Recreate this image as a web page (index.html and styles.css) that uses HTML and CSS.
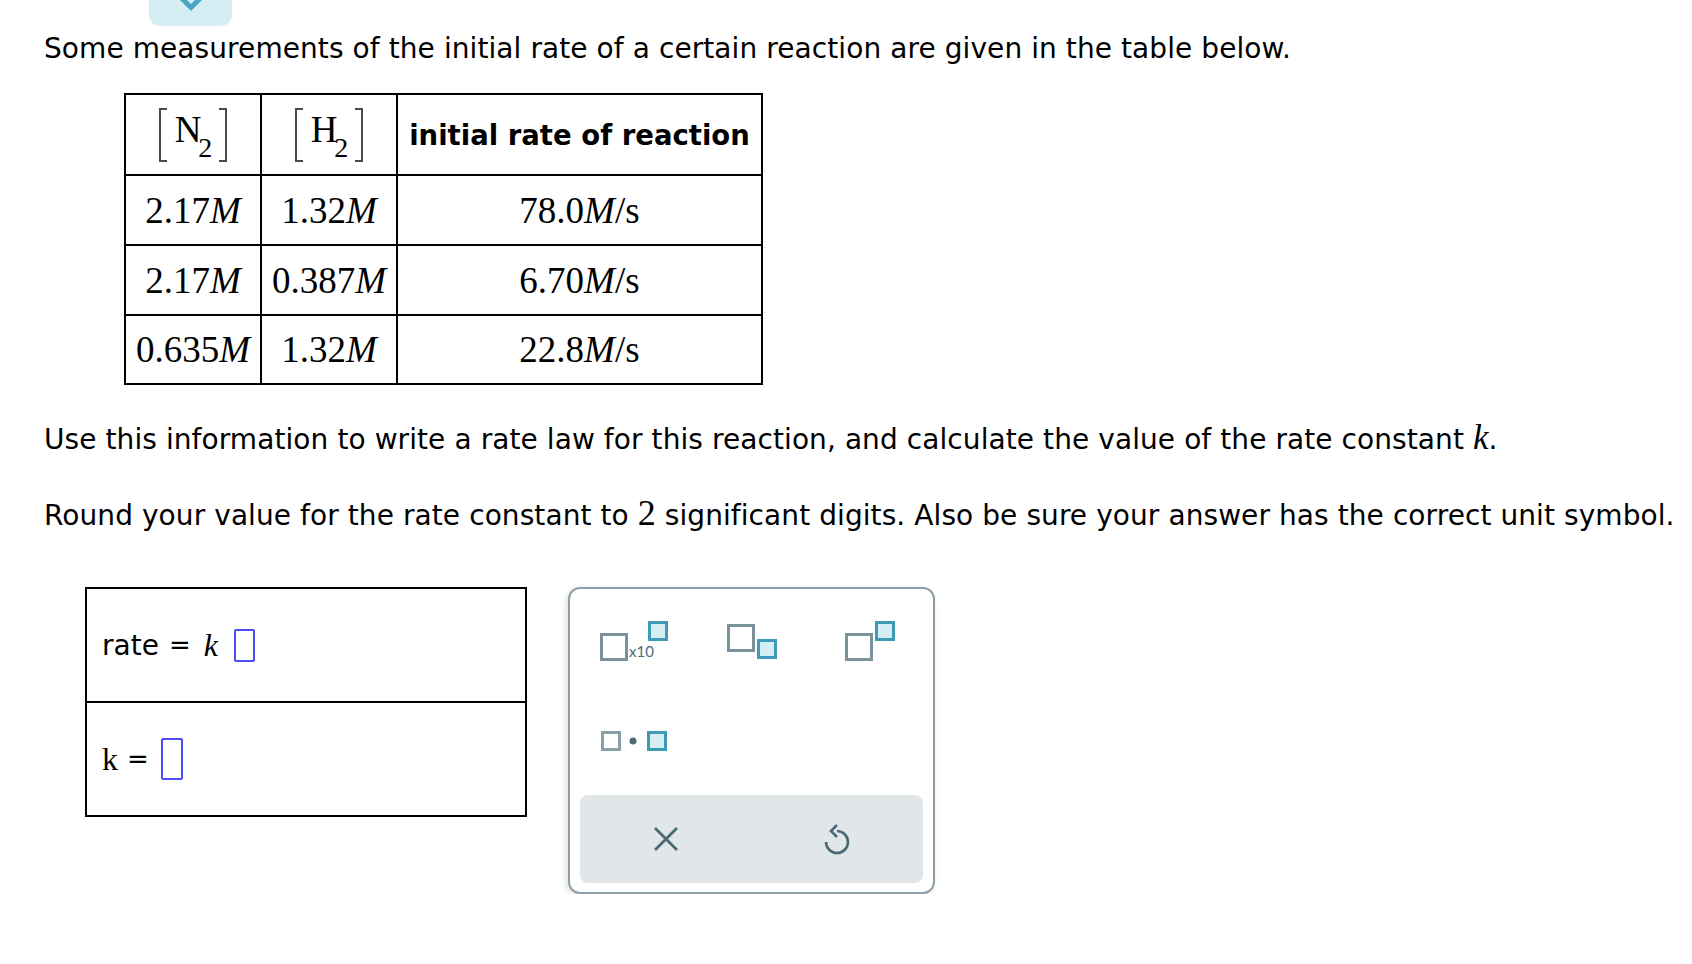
FILE: index.html
```html
<!DOCTYPE html>
<html lang="en">
<head>
<meta charset="utf-8">
<title>Rate law</title>
<link rel="stylesheet" href="styles.css">
</head>
<body>
<div class="page">
  <div class="topbtn">
    <svg class="chev" width="30" height="14" viewBox="0 0 30 14"><polyline points="0,-7.5 15,7.5 30,-7.5" fill="none" stroke="#4aa6c5" stroke-width="5"/></svg>
  </div>

  <p class="q q1">Some measurements of the initial rate of a certain reaction are given in the table below.</p>

  <div class="tbl">
    <div class="cell head"><span class="brk"><span class="bl"></span><span class="chem">N<sub>2</sub></span><span class="br"></span></span></div>
    <div class="cell head"><span class="brk"><span class="bl"></span><span class="chem">H<sub>2</sub></span><span class="br"></span></span></div>
    <div class="cell head title">initial rate of reaction</div>

    <div class="cell num">2.17<i>M</i></div>
    <div class="cell num">1.32<i>M</i></div>
    <div class="cell num">78.0<i>M</i>/s</div>

    <div class="cell num">2.17<i>M</i></div>
    <div class="cell num">0.387<i>M</i></div>
    <div class="cell num">6.70<i>M</i>/s</div>

    <div class="cell num">0.635<i>M</i></div>
    <div class="cell num">1.32<i>M</i></div>
    <div class="cell num">22.8<i>M</i>/s</div>
  </div>

  <p class="q q2">Use this information to write a rate law for this reaction, and calculate the value of the rate constant <span class="mi">k</span>.</p>

  <p class="q q3">Round your value for the rate constant to <span class="mn">2</span> significant digits. Also be sure your answer has the correct unit symbol.</p>

  <div class="answer-row">
    <div class="answer">
      <div class="arow">
        <span class="word">rate</span><span class="eq eq1">=</span><span class="ki">k</span><span class="slot slot1"></span>
      </div>
      <div class="arow">
        <span class="kr">k</span><span class="eq eq2">=</span><span class="slot slot2"></span>
      </div>
    </div>

    <div class="keypad">
      <div class="keys">
        <div class="key">
          <svg width="68" height="40" viewBox="0 0 68 40">
            <rect x="1.5" y="13.5" width="25" height="25" fill="#fff" stroke="#7b929c" stroke-width="3"/>
            <text x="29" y="36" class="x10">x10</text>
            <rect x="49.5" y="1.5" width="17" height="17" fill="#d5eef3" stroke="#3f9bb5" stroke-width="3"/>
          </svg>
        </div>
        <div class="key">
          <svg width="50" height="35" viewBox="0 0 50 35">
            <rect x="1.5" y="1.5" width="25" height="25" fill="#fff" stroke="#7b929c" stroke-width="3"/>
            <rect x="31.5" y="16.5" width="17" height="17" fill="#d5eef3" stroke="#3f9bb5" stroke-width="3"/>
          </svg>
        </div>
        <div class="key">
          <svg width="50" height="40" viewBox="0 0 50 40">
            <rect x="1.5" y="13.5" width="25" height="25" fill="#fff" stroke="#7b929c" stroke-width="3"/>
            <rect x="31.5" y="1.5" width="17" height="17" fill="#d5eef3" stroke="#3f9bb5" stroke-width="3"/>
          </svg>
        </div>
        <div class="key">
          <svg width="66" height="20" viewBox="0 0 66 20">
            <rect x="1.5" y="1.5" width="17" height="17" fill="#fff" stroke="#8a9ea6" stroke-width="3"/>
            <circle cx="32" cy="10" r="3.5" fill="#4d6b78"/>
            <rect x="47.5" y="1.5" width="17" height="17" fill="#d5eef3" stroke="#3f9bb5" stroke-width="3"/>
          </svg>
        </div>
      </div>
      <div class="actions">
        <div class="act">
          <svg width="26" height="26" viewBox="0 0 26 26"><path d="M2 2 L24 24 M24 2 L2 24" stroke="#4a6975" stroke-width="2.8" fill="none"/></svg>
        </div>
        <div class="act">
          <svg width="28" height="32" viewBox="0 0 28 32"><path d="M14 8 A11 11 0 1 1 3 19" stroke="#4a6975" stroke-width="2.6" fill="none"/><path d="M14 2 L8 8 L14 14" stroke="#4a6975" stroke-width="2.6" fill="none"/></svg>
        </div>
      </div>
    </div>
  </div>
</div>
</body>
</html>
```

FILE: styles.css
```css
html, body {
  margin: 0;
  padding: 0;
  background: #fff;
}

body {
  font-family: "DejaVu Sans", Verdana, sans-serif;
  font-size: 28px;
  color: #000;
}

.page {
  padding-left: 44px;
}

.topbtn {
  margin-left: 105px;
  width: 83px;
  height: 26px;
  background: #d5eef4;
  border-radius: 0 0 11px 11px;
  display: flex;
  justify-content: center;
  align-items: flex-start;
}

.chev {
  display: block;
}

.q {
  margin: 0;
  line-height: 34px;
  white-space: nowrap;
  letter-spacing: 0.08px;
}

.q1 {
  margin-top: 6px;
}

.q2 {
  margin-top: 38px;
}

.q3 {
  margin-top: 42px;
}

.mi {
  font-family: "Liberation Serif", "Times New Roman", serif;
  font-style: italic;
  font-size: 35px;
  line-height: 0;
  letter-spacing: 0;
}

.mn {
  font-family: "Liberation Serif", "Times New Roman", serif;
  font-size: 36px;
  line-height: 0;
  letter-spacing: 0;
}

/* data table */
.tbl {
  margin-top: 27px;
  margin-left: 80px;
  display: grid;
  grid-template-columns: 136px 136px 365px;
  grid-template-rows: 81px 70px 70px 69px;
  width: max-content;
  border-top: 2px solid #000;
  border-left: 2px solid #000;
}

.cell {
  box-sizing: border-box;
  border-right: 2px solid #000;
  border-bottom: 2px solid #000;
  display: flex;
  align-items: center;
  justify-content: center;
}

.title {
  font-weight: bold;
  font-size: 27.5px;
}

.num {
  font-family: "Liberation Serif", "Times New Roman", serif;
  font-size: 37px;
}

.num i {
  font-style: italic;
}

.brk {
  display: inline-flex;
  align-items: center;
  height: 54px;
}

.bl, .br {
  box-sizing: border-box;
  width: 8px;
  height: 54px;
  border: 2px solid #4a4a4a;
}

.bl {
  border-right: none;
  margin-right: 8px;
}

.br {
  border-left: none;
  margin-left: 7px;
}

.chem {
  font-family: "Liberation Serif", "Times New Roman", serif;
  font-size: 37px;
  line-height: 37px;
  position: relative;
  top: -5px;
}

.chem sub {
  font-size: 28px;
  line-height: 0;
  vertical-align: -15px;
  margin-left: -3px;
}

/* answer area */
.answer-row {
  margin-top: 54px;
  padding-left: 41px;
  display: flex;
  align-items: flex-start;
  gap: 41px;
}

.answer {
  box-sizing: border-box;
  width: 442px;
  border: 2px solid #000;
}

.arow {
  height: 112px;
  display: flex;
  align-items: center;
  padding-left: 15px;
}

.arow + .arow {
  border-top: 2px solid #000;
}

.eq {
  font-family: "DejaVu Sans", Verdana, sans-serif;
  font-size: 26px;
}

.eq1 {
  margin-left: 10px;
}

.eq2 {
  margin-left: 9px;
}

.ki {
  font-family: "Liberation Serif", "Times New Roman", serif;
  font-style: italic;
  font-size: 32px;
  margin-left: 13px;
}

.kr {
  font-family: "Liberation Serif", "Times New Roman", serif;
  font-size: 32px;
}

.slot {
  box-sizing: border-box;
  border: 2px solid #4b4bfa;
  border-radius: 2px;
  display: inline-block;
}

.slot1 {
  width: 21px;
  height: 33px;
  margin-left: 16px;
}

.slot2 {
  width: 22px;
  height: 42px;
  margin-left: 12px;
}

/* keypad */
.keypad {
  box-sizing: border-box;
  width: 367px;
  height: 307px;
  border: 2px solid #8c9fa8;
  border-radius: 12px;
  box-shadow: -2px 2px 6px rgba(0, 0, 0, 0.12);
  background: #fff;
}

.keys {
  display: grid;
  grid-template-columns: repeat(3, 118px);
  grid-auto-rows: 100px;
  padding: 2px 3px 0 5px;
}

.key {
  display: flex;
  align-items: center;
  justify-content: center;
}

.key svg {
  display: block;
}

.x10 {
  font-family: "Lato", "Open Sans", sans-serif;
  font-size: 15px;
  fill: #4d6b78;
}

.actions {
  margin: 4px 10px 0;
  height: 88px;
  background: #e1e6e9;
  border-radius: 8px;
  display: flex;
}

.act {
  flex: 1;
  display: flex;
  align-items: center;
  justify-content: center;
}

.act svg {
  display: block;
}
```
